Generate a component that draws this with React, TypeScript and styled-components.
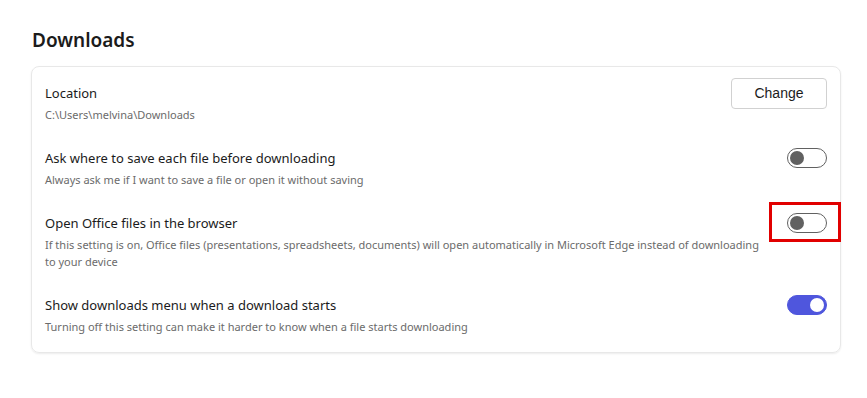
import styled, { createGlobalStyle } from 'styled-components';

const GlobalStyle = createGlobalStyle`
  html, body {
    margin: 0;
    padding: 0;
    background: #ffffff;
  }
  body {
    font-family: 'Noto Sans', 'Open Sans', sans-serif;
    color: #1b1b1b;
  }
`;

const Page = styled.main`
  width: 867px;
  height: 398px;
  box-sizing: border-box;
  padding: 26px 26px 0 31px;
  background: #ffffff;
`;

const Heading = styled.h2`
  margin: 0 0 12px 1px;
  font-size: 19px;
  line-height: 28px;
  font-weight: 600;
  color: #1b1b1b;
`;

const Card = styled.section`
  width: 810px;
  box-sizing: border-box;
  border: 1px solid #e8e8e8;
  border-radius: 8px;
  box-shadow: 0 1px 2px rgba(0, 0, 0, 0.08);
  padding: 16px 13px 17px 13px;
  display: flex;
  flex-direction: column;
  gap: 25px;
`;

const Row = styled.div`
  display: flex;
  align-items: flex-start;
  justify-content: space-between;
  gap: 20px;
`;

const Text = styled.div`
  flex: 1;
  min-width: 0;
`;

const Title = styled.div`
  font-size: 13px;
  line-height: 20px;
  color: #1b1b1b;
`;

const Description = styled.div`
  margin-top: 3px;
  font-size: 11px;
  line-height: 17px;
  color: #6b6b6b;
`;

const Control = styled.div`
  height: 20px;
  display: flex;
  align-items: center;
  justify-content: flex-end;
  flex-shrink: 0;
`;

const Button = styled.button`
  width: 96px;
  height: 31px;
  box-sizing: border-box;
  border: 1px solid #d1d1d1;
  border-radius: 4px;
  background: #ffffff;
  font-family: 'Liberation Sans', Arial, sans-serif;
  font-size: 14px;
  color: #1b1b1b;
  cursor: pointer;
`;

const Highlight = styled.div`
  margin: -11px -14px -9px -18px;
  padding: 8px 11px 6px 15px;
  border: 3px solid #e10000;
`;

const Track = styled.div<{ $on: boolean }>`
  width: 40px;
  height: 20px;
  box-sizing: border-box;
  border-radius: 10px;
  border: 1px solid ${(p) => (p.$on ? '#4f56dd' : '#616161')};
  background: ${(p) => (p.$on ? '#4f56dd' : '#ffffff')};
  display: flex;
  align-items: center;
  justify-content: ${(p) => (p.$on ? 'flex-end' : 'flex-start')};
  padding: 0 2px;
`;

const Knob = styled.span<{ $on: boolean }>`
  width: 14px;
  height: 14px;
  border-radius: 50%;
  background: ${(p) => (p.$on ? '#ffffff' : '#616161')};
`;

const Toggle = ({ on }: { on: boolean }) => (
  <Track $on={on}>
    <Knob $on={on} />
  </Track>
);

export default function App() {
  return (
    <>
      <GlobalStyle />
      <Page>
        <Heading>Downloads</Heading>
        <Card>
          <Row>
            <Text>
              <Title>Location</Title>
              <Description>C:\Users\melvina\Downloads</Description>
            </Text>
            <Control>
              <Button>Change</Button>
            </Control>
          </Row>
          <Row>
            <Text>
              <Title>Ask where to save each file before downloading</Title>
              <Description>Always ask me if I want to save a file or open it without saving</Description>
            </Text>
            <Control>
              <Toggle on={false} />
            </Control>
          </Row>
          <Row>
            <Text>
              <Title>Open Office files in the browser</Title>
              <Description>
                If this setting is on, Office files (presentations, spreadsheets, documents) will open
                automatically in Microsoft Edge instead of downloading to your device
              </Description>
            </Text>
            <Control>
              <Highlight>
                <Toggle on={false} />
              </Highlight>
            </Control>
          </Row>
          <Row>
            <Text>
              <Title>Show downloads menu when a download starts</Title>
              <Description>Turning off this setting can make it harder to know when a file starts downloading</Description>
            </Text>
            <Control>
              <Toggle on={true} />
            </Control>
          </Row>
        </Card>
      </Page>
    </>
  );
}
